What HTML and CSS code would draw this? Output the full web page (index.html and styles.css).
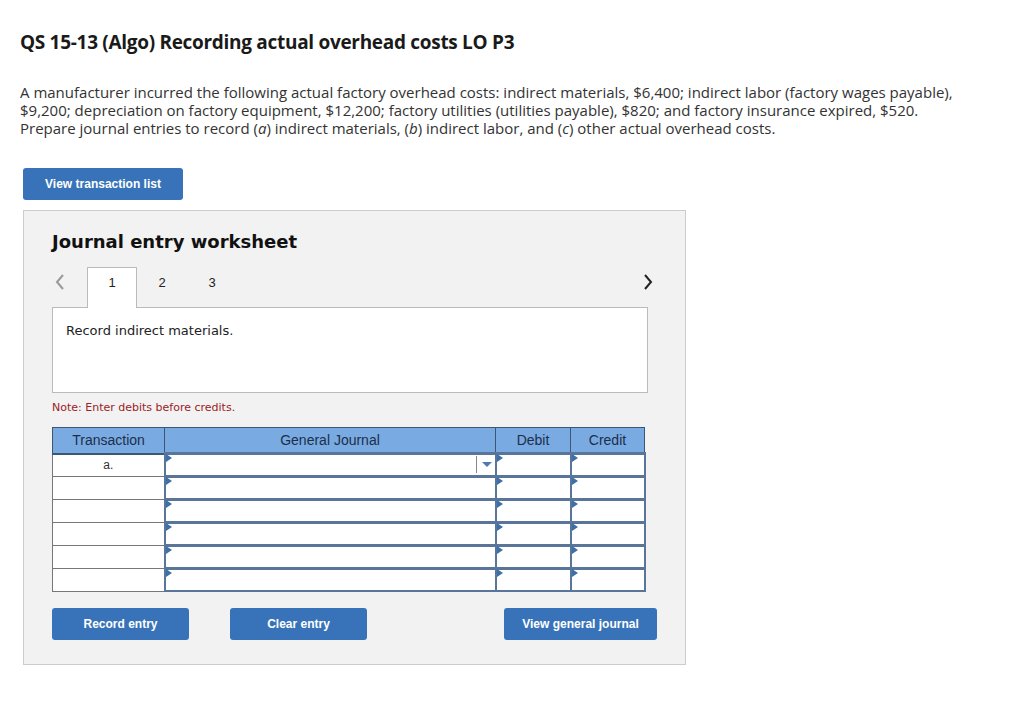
FILE: index.html
```html
<!DOCTYPE html>
<html lang="en">
<head>
  <meta charset="UTF-8">
  <title>QS 15-13 (Algo) Recording actual overhead costs LO P3</title>
  <link rel="stylesheet" href="styles.css">
</head>
<body>
  <h1 class="title">QS 15-13 (Algo) Recording actual overhead costs LO P3</h1>

  <p class="question">A manufacturer incurred the following actual factory overhead costs: indirect materials, $6,400; indirect labor (factory wages payable), $9,200; depreciation on factory equipment, $12,200; factory utilities (utilities payable), $820; and factory insurance expired, $520. Prepare journal entries to record (<i>a</i>) indirect materials, (<i>b</i>) indirect labor, and (<i>c</i>) other actual overhead costs.</p>

  <button class="btn btn-list">View transaction list</button>

  <div class="worksheet">
    <h2>Journal entry worksheet</h2>

    <div class="tabs">
      <span class="arrow arrow-left">
        <svg width="10" height="16" viewBox="0 0 10 16"><path d="M8 1 L2 8 L8 15" fill="none" stroke="#999" stroke-width="2"/></svg>
      </span>
      <span class="tab active">1</span>
      <span class="tab">2</span>
      <span class="tab">3</span>
      <span class="arrow arrow-right">
        <svg width="10" height="16" viewBox="0 0 10 16"><path d="M2 1 L8 8 L2 15" fill="none" stroke="#222" stroke-width="2"/></svg>
      </span>
    </div>

    <div class="desc">Record indirect materials.</div>

    <p class="note">Note: Enter debits before credits.</p>

    <table class="journal">
      <thead>
        <tr>
          <th class="c-trans">Transaction</th>
          <th class="c-acct">General Journal</th>
          <th class="c-debit">Debit</th>
          <th class="c-credit">Credit</th>
        </tr>
      </thead>
      <tbody>
        <tr>
          <td class="trans">a.</td>
          <td class="inp"><span class="mark"></span><span class="select"></span></td>
          <td class="inp"><span class="mark"></span></td>
          <td class="inp"><span class="mark"></span></td>
        </tr>
        <tr>
          <td class="trans"></td>
          <td class="inp"><span class="mark"></span></td>
          <td class="inp"><span class="mark"></span></td>
          <td class="inp"><span class="mark"></span></td>
        </tr>
        <tr>
          <td class="trans"></td>
          <td class="inp"><span class="mark"></span></td>
          <td class="inp"><span class="mark"></span></td>
          <td class="inp"><span class="mark"></span></td>
        </tr>
        <tr>
          <td class="trans"></td>
          <td class="inp"><span class="mark"></span></td>
          <td class="inp"><span class="mark"></span></td>
          <td class="inp"><span class="mark"></span></td>
        </tr>
        <tr>
          <td class="trans"></td>
          <td class="inp"><span class="mark"></span></td>
          <td class="inp"><span class="mark"></span></td>
          <td class="inp"><span class="mark"></span></td>
        </tr>
        <tr>
          <td class="trans"></td>
          <td class="inp"><span class="mark"></span></td>
          <td class="inp"><span class="mark"></span></td>
          <td class="inp"><span class="mark"></span></td>
        </tr>
      </tbody>
    </table>

    <div class="actions">
      <button class="btn btn-record">Record entry</button>
      <button class="btn btn-clear">Clear entry</button>
      <button class="btn btn-view">View general journal</button>
    </div>
  </div>
</body>
</html>
```

FILE: styles.css
```css
body {
  margin: 0;
  padding: 0 20px;
  background: #fff;
  color: #333;
  font-family: 'Open Sans', Arial, sans-serif;
}

.title {
  margin: 29px 0 0;
  font-size: 19px;
  font-weight: 700;
  color: #1a1a1a;
  letter-spacing: -0.3px;
}

.question {
  margin: 28px 0 0;
  font-size: 15px;
  line-height: 18px;
  color: #333;
  max-width: 950px;
}

.btn {
  border: 0;
  border-radius: 3px;
  background-color: #3873b9;
  color: #fff;
  font-family: 'Liberation Sans', Arial, sans-serif;
  font-size: 12px;
  font-weight: 700;
  height: 32px;
  cursor: pointer;
}

.btn-list {
  display: block;
  margin: 31px 0 0 3px;
  width: 160px;
}

.worksheet {
  margin: 10px 0 0 3px;
  width: 633px;
  padding: 0 0 24px 28px;
  background: #f2f2f2;
  border: 1px solid #ccc;
}

.worksheet h2 {
  margin: 20px 0 0;
  font-family: 'DejaVu Sans', Verdana, sans-serif;
  font-size: 18px;
  font-weight: 700;
  color: #111;
}

.tabs {
  display: flex;
  align-items: flex-start;
  margin-top: 15px;
  width: 595px;
  height: 40px;
}

.arrow {
  display: flex;
  align-items: center;
  height: 30px;
}

.arrow-left {
  width: 35px;
  padding-left: 3px;
  box-sizing: border-box;
}

.arrow-right {
  margin-left: auto;
  margin-right: -6px;
}

.tab {
  width: 50px;
  height: 40px;
  display: flex;
  justify-content: center;
  padding-top: 8px;
  font-family: 'Liberation Sans', Arial, sans-serif;
  font-size: 13px;
  color: #222;
  box-sizing: border-box;
}

.tab.active {
  background: #fff;
  border: 1px solid #bbb;
  border-bottom: 0;
  padding-top: 7px;
  height: 41px;
  margin-bottom: -1px;
  position: relative;
  z-index: 1;
}

.desc {
  width: 596px;
  height: 86px;
  box-sizing: border-box;
  background: #fff;
  border: 1px solid #bbb;
  padding: 15px 13px;
  font-family: 'DejaVu Sans', Verdana, sans-serif;
  font-size: 13px;
  color: #222;
}

.note {
  margin: 8px 0 0;
  font-family: 'DejaVu Sans', Verdana, sans-serif;
  font-size: 11px;
  color: #9b2226;
}

.journal {
  margin-top: 13px;
  border-collapse: collapse;
  width: 588px;
  table-layout: fixed;
}

.journal th {
  height: 24px;
  padding: 0;
  background: #7aaae2;
  font-family: 'Liberation Sans', Arial, sans-serif;
  font-size: 14px;
  font-weight: 400;
  color: #1b2f4a;
  border: 1px solid #3d5673;
  border-bottom: 2px solid #3d5673;
}

.c-trans { width: 111px; }
.c-acct { width: 330px; }
.c-debit { width: 74px; }
.c-credit { width: 73px; }

.journal td {
  height: 20px;
  padding: 0;
  background: #fff;
}

.trans {
  border: 1px solid #777;
  text-align: center;
  font-family: 'Liberation Sans', Arial, sans-serif;
  font-size: 12px;
  color: #333;
}

.inp {
  position: relative;
  border: 2px solid #59769a;
  border-top-width: 3px;
}

.journal tr:last-child .inp {
  border-bottom-width: 2px;
}

.mark {
  position: absolute;
  top: -1px;
  left: 0;
  width: 0;
  height: 0;
  border-top: 4px solid transparent;
  border-bottom: 4px solid transparent;
  border-left: 6px solid #3d6fa8;
}

.select {
  position: absolute;
  top: 1px;
  right: 0;
  width: 18px;
  height: 17px;
  border-left: 1px solid #888;
}

.select::after {
  content: '';
  position: absolute;
  top: 6px;
  left: 5px;
  border-left: 5px solid transparent;
  border-right: 5px solid transparent;
  border-top: 5px solid #4d7bb0;
}

.actions {
  display: flex;
  margin-top: 16px;
  width: 605px;
}

.btn-record,
.btn-clear {
  width: 137px;
  margin-right: 41px;
}

.btn-view {
  width: 153px;
  margin-left: auto;
}
```
